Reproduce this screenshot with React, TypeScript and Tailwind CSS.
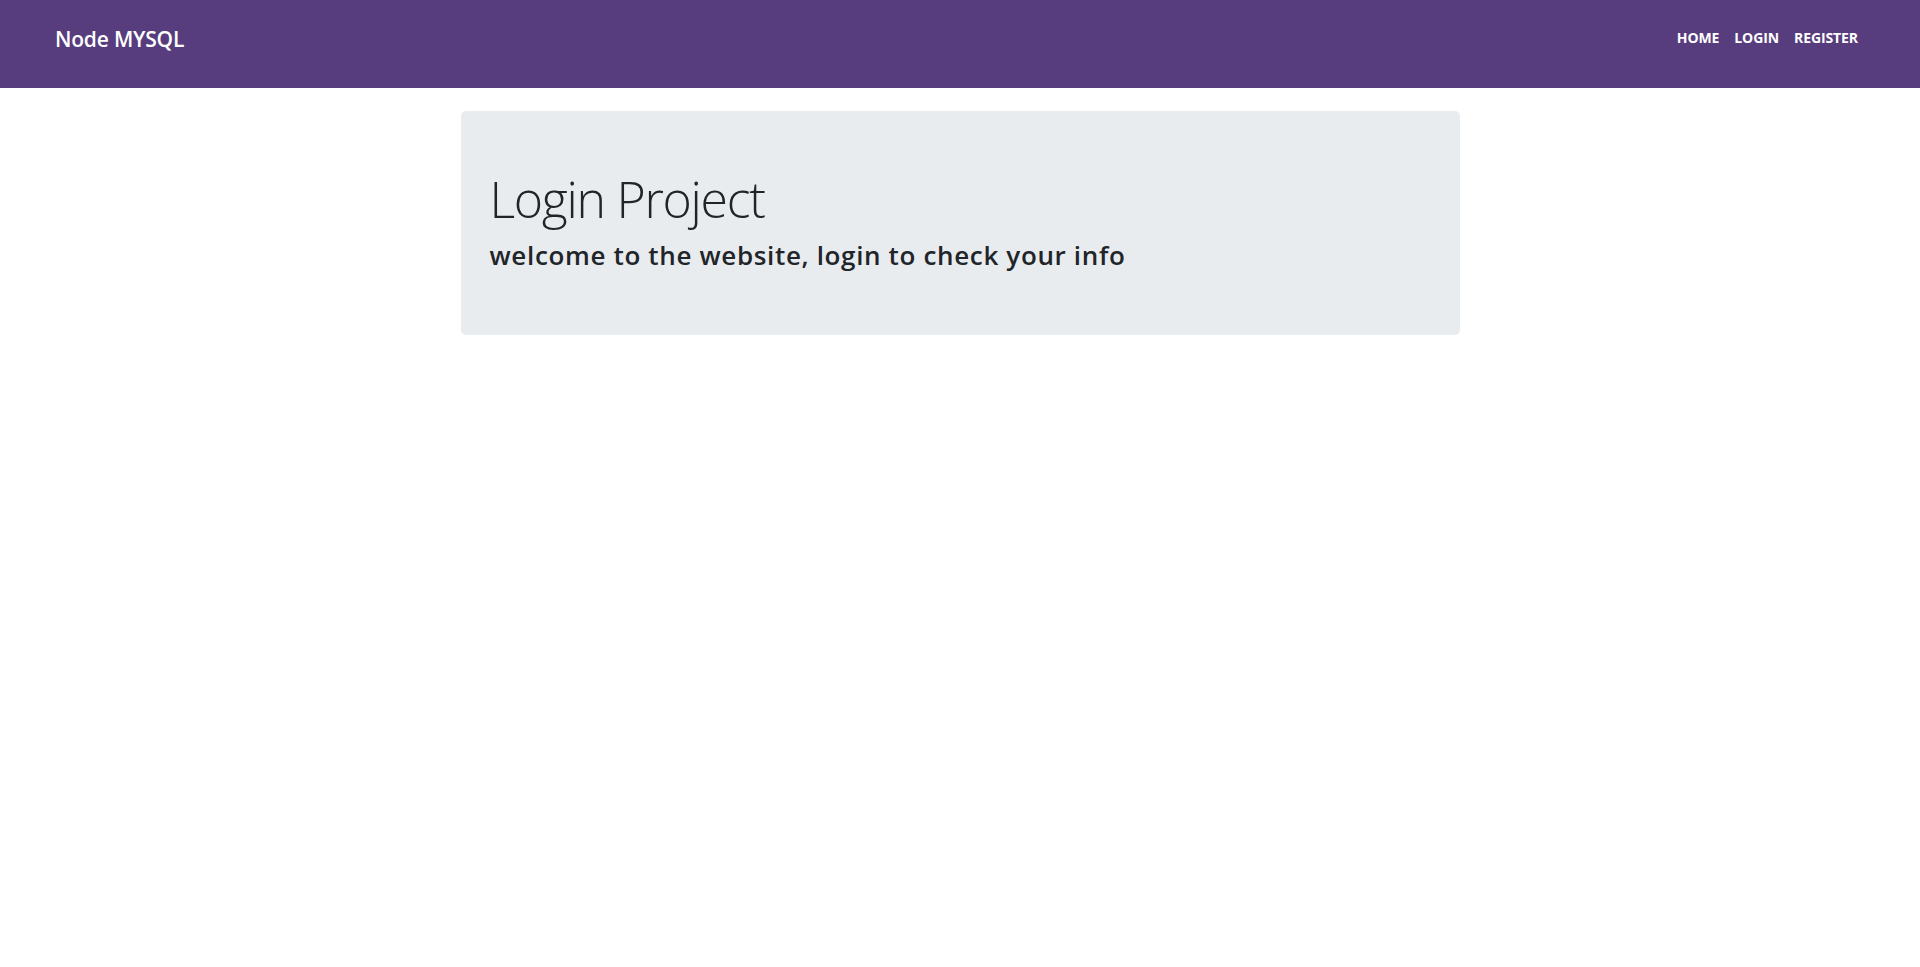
export default function App() {
  return (
    <div className="min-h-screen bg-white" style={{ fontFamily: '"Open Sans", "Noto Sans", sans-serif' }}>
      <nav className="h-[88px] bg-[#583d7e] flex items-start justify-between pl-[55px] pr-[62px]">
        <a className="mt-[29px] text-[21px] leading-none font-semibold tracking-[-0.2px] text-white">Node MYSQL</a>
        <ul className="mt-[31px] flex gap-[15px] text-[14px] leading-none font-bold tracking-[-0.1px] text-white">
          <li>HOME</li>
          <li>LOGIN</li>
          <li>REGISTER</li>
        </ul>
      </nav>
      <div className="mx-auto mt-[23px] w-[999px] rounded-[5px] bg-[#e9ecef] pl-[29px] pt-[63px] pb-[67px] text-[#212529]">
        <h1 className="text-[50px] leading-none font-light tracking-[-1.3px]">Login Project</h1>
        <h3 className="mt-[18px] text-[26px] leading-none font-semibold tracking-[0.65px]">welcome to the website, login to check your info</h3>
      </div>
    </div>
  );
}
